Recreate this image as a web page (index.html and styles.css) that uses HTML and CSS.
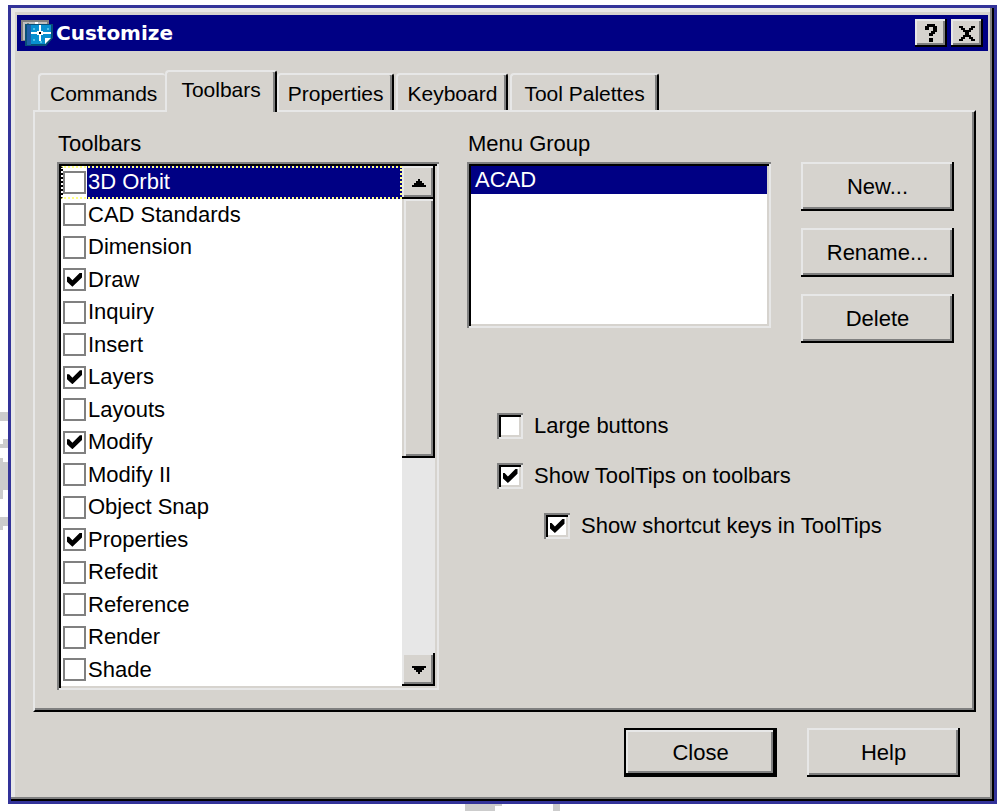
FILE: index.html
```html
<!DOCTYPE html>
<html lang="en">
<head>
<meta charset="utf-8">
<title>Customize</title>
<link rel="stylesheet" href="styles.css">
</head>
<body>
<svg class="backdrop backdrop-left" width="8" height="118" viewBox="0 0 8 118" aria-hidden="true"><path fill="#ccc" d="M0 0h8v9H0zM3 27h5v9H0v-4h3zM0 46h3v4h5v28H3v9H0zM0 105h8v9H3v4H0z"/></svg>
<svg class="backdrop backdrop-bottom" width="112" height="7" viewBox="0 0 112 7" aria-hidden="true"><path fill="#ccc" d="M0 0h37v2h-7v5H0zM88 0h7v7h-7z"/></svg>
<main class="dialog">
  <div class="bevel">
    <header class="titlebar">
      <svg class="app-icon" width="32" height="27" viewBox="0 0 32 27" aria-hidden="true">
        <path fill="#808080" d="M0 0h28v21H0z"/>
        <path fill="#c0c0c0" d="M2 2h24v18H2z"/>
        <path fill="#fff" d="M14 2h3v3h-3z"/>
        <path fill="#808080" d="M6 3h2v2H6z"/>
        <path fill="#085078" d="M4 4h28v14l-7 8H4z"/>
        <path fill="#2060a8" d="M6 5h4v20H6z"/>
        <path fill="#0890d0" d="M10 5h20v13h-5v6H10z"/>
        <path fill="#50c0e8" d="M12 8h2v2h-2zM26 8h2v2h-2zM12 19h2v2h-2zM19 21h2v2h-2z"/>
        <path fill="#fff" d="M18 5h2v6h2v1h8v2h-8v1h-2v6h-2v-6h-2v-1h-6v-2h6v-1h2z"/>
        <path fill="#000" d="M18 12h2v2h-2z"/>
        <path fill="#fff" d="M24 18h6l-6 6z"/>
      </svg>
      <h1 class="title">Customize</h1>
      <div class="title-actions">
        <button class="title-button" type="button" aria-label="Help">
          <svg width="12" height="18" viewBox="0 0 12 18"><path d="M2 0h8v2h2v6h-2v2H8v2H4V9h2V7h2V3H4v3H0V2h2zM4 14h4v4H4z"/></svg>
        </button>
        <button class="title-button" type="button" aria-label="Close">
          <svg width="16" height="15" viewBox="0 0 16 15"><path d="M0 0h4v2h2v2h4V2h2V0h4v2h-2v2h-2v2h-2v3h2v2h2v2h2v2h-4v-2h-2v-2H6v2H4v2H0v-2h2v-2h2V9h2V6H4V4H2V2H0z"/></svg>
        </button>
      </div>
    </header>

    <div class="content">
      <div class="tabs" role="tablist">
        <button class="tab tab-first" type="button" role="tab">Commands</button>
        <button class="tab tab-active" type="button" role="tab" aria-selected="true">Toolbars</button>
        <button class="tab" type="button" role="tab">Properties</button>
        <button class="tab tab-spaced" type="button" role="tab">Keyboard</button>
        <button class="tab tab-spaced tab-wide" type="button" role="tab">Tool Palettes</button>
      </div>

      <section class="panel">
        <div class="toolbars">
          <h2 class="caption">Toolbars</h2>
          <div class="listbox">
            <ul class="items">
              <li class="item item-selected"><label><input class="check" type="checkbox">3D Orbit</label></li>
              <li class="item"><label><input class="check" type="checkbox">CAD Standards</label></li>
              <li class="item"><label><input class="check" type="checkbox">Dimension</label></li>
              <li class="item"><label><input class="check" type="checkbox" checked>Draw</label></li>
              <li class="item"><label><input class="check" type="checkbox">Inquiry</label></li>
              <li class="item"><label><input class="check" type="checkbox">Insert</label></li>
              <li class="item"><label><input class="check" type="checkbox" checked>Layers</label></li>
              <li class="item"><label><input class="check" type="checkbox">Layouts</label></li>
              <li class="item"><label><input class="check" type="checkbox" checked>Modify</label></li>
              <li class="item"><label><input class="check" type="checkbox">Modify II</label></li>
              <li class="item"><label><input class="check" type="checkbox">Object Snap</label></li>
              <li class="item"><label><input class="check" type="checkbox" checked>Properties</label></li>
              <li class="item"><label><input class="check" type="checkbox">Refedit</label></li>
              <li class="item"><label><input class="check" type="checkbox">Reference</label></li>
              <li class="item"><label><input class="check" type="checkbox">Render</label></li>
              <li class="item"><label><input class="check" type="checkbox">Shade</label></li>
            </ul>
            <div class="scrollbar">
              <button class="scroll-button" type="button" aria-label="Scroll up"><svg width="14" height="8" viewBox="0 0 14 8"><path d="M6 0h2v2h2v2h2v2h2v2H0V6h2V4h2V2h2z"/></svg></button>
              <div class="track"><div class="thumb"></div></div>
              <button class="scroll-button" type="button" aria-label="Scroll down"><svg width="14" height="8" viewBox="0 0 14 8"><path d="M0 0h14v2h-2v2h-2v2H8v2H6V6H4V4H2V2H0z"/></svg></button>
            </div>
          </div>
        </div>

        <div class="settings">
          <h2 class="caption">Menu Group</h2>
          <div class="group-row">
            <ul class="group-list" role="listbox" aria-label="Menu Group">
              <li class="group-item" role="option" aria-selected="true">ACAD</li>
            </ul>
            <div class="group-actions">
              <button class="button" type="button">New...</button>
              <button class="button" type="button">Rename...</button>
              <button class="button" type="button">Delete</button>
            </div>
          </div>
          <div class="options">
            <label class="option"><input class="check check-sunken" type="checkbox">Large buttons</label>
            <label class="option"><input class="check check-sunken" type="checkbox" checked>Show ToolTips on toolbars</label>
            <label class="option option-nested"><input class="check check-sunken" type="checkbox" checked>Show shortcut keys in ToolTips</label>
          </div>
        </div>
      </section>

      <footer class="footer">
        <button class="button button-default" type="button">Close</button>
        <button class="button" type="button">Help</button>
      </footer>
    </div>
  </div>
</main>
</body>
</html>
```

FILE: styles.css
```css
:root {
  --face: #d6d3ce;
  --light: #e7e7e7;
  --shade: #808080;
  --navy: #000084;
}

* { box-sizing: border-box; }

body {
  margin: 0;
  min-height: 100vh;
  display: flex;
  padding: 5px 8px 7px;
  background: #fff;
  color: #000;
  font: 22px/28px "Liberation Sans", sans-serif;
}

h1, h2, ul { margin: 0; padding: 0; font-size: inherit; font-weight: normal; list-style: none; }
button { font: inherit; color: inherit; padding: 0; }
svg { display: block; }

.backdrop { position: absolute; }
.backdrop-left { left: 0; top: 412px; }
.backdrop-bottom { left: 465px; top: 804px; }

.dialog { flex: 1; display: flex; border: 3px solid #333399; }

.bevel {
  flex: 1;
  display: flex;
  flex-direction: column;
  padding: 7px 6px 0;
  background: var(--face);
  box-shadow: inset -2px -2px #000, inset -4px -4px var(--shade), inset 4px 4px var(--light);
}

.titlebar {
  display: flex;
  align-items: center;
  height: 36px;
  padding: 0 5px 0 4px;
  background: var(--navy);
  color: #fff;
}
.title { flex: 1; margin-left: 3px; font: bold 20px/28px "DejaVu Sans", sans-serif; }
.title-actions { display: flex; gap: 4px; }
.title-button { width: 32px; height: 28px; }

.title-button, .button, .scroll-button, .thumb {
  display: flex;
  align-items: center;
  justify-content: center;
  border: 0;
  background: var(--face);
  box-shadow: inset -2px -2px #000, inset 2px 2px var(--light), inset -4px -4px var(--shade);
}

.content { flex: 1; display: flex; flex-direction: column; padding: 19px 12px 24px 16px; }

.tabs { display: flex; align-items: flex-end; padding-left: 5px; font-size: 21px; }
.tab {
  height: 37px;
  padding: 3px 9px 0;
  border: 2px solid var(--light);
  border-right-color: #000;
  border-bottom: 0;
  border-radius: 4px 3px 0 0;
  background: var(--face);
  box-shadow: inset -2px 0 var(--shade);
}
.tab-first { padding: 3px 8px 0 10px; border-right: 0; box-shadow: none; }
.tab-active {
  height: 42px;
  margin-bottom: -2px;
  padding: 0 14px 4px;
  z-index: 1;
}
.tab-spaced { margin-left: 2px; }
.tab-wide { padding: 3px 12px 0; }

.panel {
  flex: 1;
  display: grid;
  grid-template-columns: 382fr 487fr;
  gap: 28px;
  padding: 18px 20px 18px 22px;
  border: 2px solid var(--light);
  border-right-color: #000;
  border-bottom-color: #000;
  box-shadow: inset -2px -2px var(--shade);
}

.caption { margin: 0 0 4px 1px; }
.toolbars { display: flex; flex-direction: column; }

.listbox, .group-list {
  display: flex;
  padding: 4px;
  background: #fff;
  box-shadow: inset 2px 2px var(--shade), inset -2px -2px var(--light), inset 4px 4px #000, inset -4px -4px var(--face);
}
.listbox { flex: 1; margin-bottom: 2px; }
.items { flex: 1; display: grid; grid-auto-rows: 1fr; }
.item { display: flex; align-items: center; padding-left: 2px; }
.item label { display: flex; align-items: center; gap: 2px; line-height: 26px; }
.item-selected {
  padding-left: 0;
  border: 2px dotted #ffff84;
  border-left-color: #000;
  background: linear-gradient(90deg, #fff 26px, var(--navy) 26px) border-box;
  color: #fff;
}

.check {
  appearance: none;
  display: grid;
  place-items: center;
  flex: none;
  width: 23px;
  height: 23px;
  margin: 0;
  border: 2px solid var(--shade);
  background: #fff;
}
.check:checked::before {
  content: "";
  width: 15px;
  height: 14px;
  background: #000;
  clip-path: polygon(0 28%, 14% 28%, 36% 54%, 86% 0, 100% 0, 100% 34%, 36% 100%, 0 64%);
}
.check-sunken {
  width: 26px;
  height: 26px;
  border: 0;
  box-shadow: inset 2px 2px var(--shade), inset -2px -2px var(--light), inset 4px 4px #000, inset -4px -4px var(--face);
}

.scrollbar { width: 33px; display: flex; flex-direction: column; }
.scroll-button { height: 33px; }
.track { flex: 1; background: var(--light); }
.thumb { height: 57%; box-shadow: inset -2px -2px #000, inset 2px 0 var(--face), inset 4px 2px var(--light), inset -4px -4px var(--shade); }

.group-row { display: flex; align-items: flex-start; gap: 30px; }
.group-list { flex: 1; flex-direction: column; height: 166px; }
.group-item { padding: 0 4px; background: var(--navy); color: #fff; }
.group-actions { display: flex; flex-direction: column; gap: 17px; }
.button { width: 153px; height: 49px; }

.options { display: flex; flex-direction: column; gap: 22px; padding: 69px 0 0 30px; }
.option { display: flex; align-items: center; gap: 11px; }
.option-nested { margin-left: 47px; }

.footer { display: flex; justify-content: flex-end; gap: 30px; padding: 16px 16px 0 0; }
.button-default { border: 2px solid #000; }
```
